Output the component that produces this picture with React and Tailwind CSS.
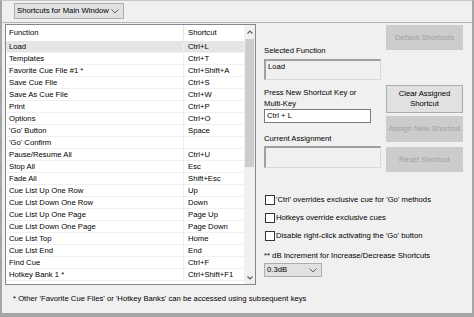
import React from "react";

const rows = [
  ["Load", "Ctrl+L"],
  ["Templates", "Ctrl+T"],
  ["Favorite Cue File #1 *", "Ctrl+Shift+A"],
  ["Save Cue File", "Ctrl+S"],
  ["Save As Cue File", "Ctrl+W"],
  ["Print", "Ctrl+P"],
  ["Options", "Ctrl+O"],
  ["'Go' Button", "Space"],
  ["'Go' Confirm", ""],
  ["Pause/Resume All", "Ctrl+U"],
  ["Stop All", "Esc"],
  ["Fade All", "Shift+Esc"],
  ["Cue List Up One Row", "Up"],
  ["Cue List Down One Row", "Down"],
  ["Cue List Up One Page", "Page Up"],
  ["Cue List Down One Page", "Page Down"],
  ["Cue List Top", "Home"],
  ["Cue List End", "End"],
  ["Find Cue", "Ctrl+F"],
  ["Hotkey Bank 1 *", "Ctrl+Shift+F1"],
];

function Chevron() {
  return (
    <svg width="8" height="5" viewBox="0 0 8 5" className="shrink-0">
      <polyline points="0.5,0.5 4,4 7.5,0.5" fill="none" stroke="#606060" strokeWidth="1" />
    </svg>
  );
}

function Check({ label }) {
  return (
    <div className="flex items-center h-[18px] whitespace-nowrap">
      <div className="w-[10px] h-[10px] border border-[#333] bg-white ml-[1px] mr-[1px] shrink-0" />
      <span>{label}</span>
    </div>
  );
}

function Btn({ children, disabled, h, mt }) {
  return (
    <div
      className={
        "w-[77px] flex items-center justify-center text-center leading-[10px] border " +
        (disabled
          ? "bg-[#cccccc] border-[#cccccc] text-[#a0a0a0]"
          : "bg-[#e1e1e1] border-[#adadad] text-black")
      }
      style={{ height: h, marginTop: mt }}
    >
      {children}
    </div>
  );
}

export default function App() {
  return (
    <div
      className="w-[474px] h-[317px] bg-[#f0f0f0] border-l-2 border-r-2 border-b-4 border-t border-[#a6a6a6] border-t-[#c8c8c8] flex flex-col text-[7.7px] leading-[10px] text-black overflow-hidden"
      style={{ fontFamily: '"Liberation Sans", Arial, sans-serif' }}
    >
      <div className="h-[21px] flex items-start pt-[2px] pl-[12px] shrink-0">
        <div className="w-[110px] h-[16px] bg-[#e1e1e1] border border-[#adadad] flex items-center justify-between pl-[2px] pr-[4px] whitespace-nowrap">
          <span>Shortcuts for Main Window</span>
          <Chevron />
        </div>
      </div>
      <div className="flex-1 border-t border-[#b4b4b4] flex flex-col">
        <div className="flex pl-[3px] pt-[1px]">
          {/* list */}
          <div className="w-[251px] h-[261px] bg-white border border-[#828790] flex shrink-0">
            <div className="flex-1 flex flex-col">
              <div className="h-[16px] flex items-center shrink-0">
                <div className="w-[178px] pl-[3px] border-r border-[#e5e5e5] h-full flex items-center">Function</div>
                <div className="pl-[4px]">Shortcut</div>
              </div>
              {rows.map(([f, s], i) => (
                <div
                  key={i}
                  className={"h-[12px] flex items-center border-b border-[#f0f0f0] " + (i === 0 ? "bg-[#e5e5e5]" : "")}
                >
                  <div className="w-[178px] pl-[3px] border-r border-[#f0f0f0] h-full flex items-center whitespace-nowrap">{f}</div>
                  <div className="pl-[4px] whitespace-nowrap">{s}</div>
                </div>
              ))}
            </div>
            <div className="w-[11px] bg-[#f0f0f0] flex flex-col items-center shrink-0">
              <div className="h-[11px] flex items-center justify-center mt-[1px]">
                <svg width="6" height="4" viewBox="0 0 6 4">
                  <polyline points="0.5,3.5 3,1 5.5,3.5" fill="none" stroke="#606060" strokeWidth="1.2" />
                </svg>
              </div>
              <div className="w-[9px] h-[128px] bg-[#cdcdcd] mt-[2px]" />
              <div className="flex-1" />
              <div className="h-[11px] flex items-center justify-center mb-[1px]">
                <svg width="6" height="4" viewBox="0 0 6 4">
                  <polyline points="0.5,0.5 3,3 5.5,0.5" fill="none" stroke="#606060" strokeWidth="1.2" />
                </svg>
              </div>
            </div>
          </div>
          {/* right */}
          <div className="ml-[8px] flex flex-col">
            <div className="flex">
              <div className="w-[117px] flex flex-col">
                <div className="mt-[22px]">Selected Function</div>
                <div className="mt-[3px] h-[21px] border-t-2 border-l-2 border-[#a0a0a0] border-r border-b border-r-[#d8d8d8] border-b-[#d8d8d8] pl-[2px] pt-[1px]">Load</div>
                <div className="mt-[7px] leading-[11px]">
                  Press New Shortcut Key or
                  <br />
                  Multi-Key
                </div>
                <div className="w-[107px] h-[14px] bg-white border border-[#7a7a7a] flex items-center pl-[2px] mt-[0px]">Ctrl + L</div>
                <div className="mt-[11px]">Current Assignment</div>
                <div className="mt-[2px] h-[22px] border-t-2 border-l-2 border-[#a0a0a0] border-r border-b border-r-[#d8d8d8] border-b-[#d8d8d8]" />
              </div>
              <div className="ml-[5px] flex flex-col">
                <Btn disabled h={25} mt={1}>Default Shortcuts</Btn>
                <Btn h={28} mt={35}>
                  Clear Assigned
                  <br />
                  Shortcut
                </Btn>
                <Btn disabled h={26} mt={3}>Assign New Shortcut</Btn>
                <Btn disabled h={25} mt={5}>Reset Shortcut</Btn>
              </div>
            </div>
            <div className="mt-[19px] flex flex-col">
              <Check label="'Ctrl' overrides exclusive cue for 'Go' methods" />
              <Check label="Hotkeys override exclusive cues" />
              <Check label="Disable right-click activating the 'Go' button" />
            </div>
            <div className="mt-[6px] whitespace-nowrap">** dB Increment for Increase/Decrease Shortcuts</div>
            <div className="mt-[2px] w-[58px] h-[14px] bg-[#e1e1e1] border border-[#adadad] flex items-center justify-between pl-[2px] pr-[4px]">
              <span>0.3dB</span>
              <Chevron />
            </div>
          </div>
        </div>
        <div className="pl-[11px] mt-[9px] whitespace-nowrap">* Other 'Favorite Cue Files' or 'Hotkey Banks' can be accessed using subsequent keys</div>
      </div>
    </div>
  );
}
